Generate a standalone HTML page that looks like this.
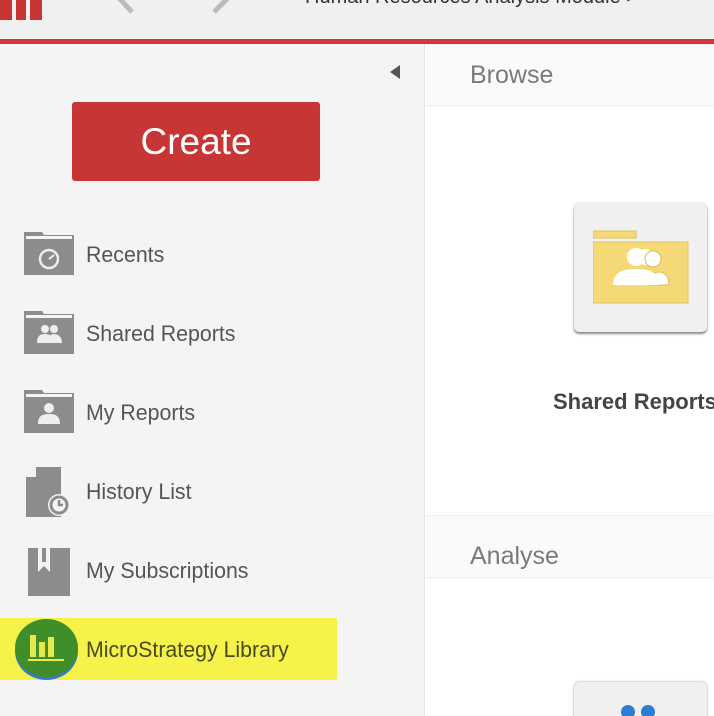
<!DOCTYPE html>
<html><head><meta charset="utf-8"><style>
*{margin:0;padding:0;box-sizing:border-box}
html,body{width:714px;height:716px;overflow:hidden}
body{background:#fff;font-family:"Liberation Sans",sans-serif;position:relative}
.top{position:absolute;left:0;top:0;width:714px;height:39px;background:#f0f0f0}
.red{position:absolute;left:0;top:39px;width:714px;height:5px;background:#d2383a}
.side{position:absolute;left:0;top:44px;width:425px;height:672px;background:#f4f4f4;border-right:1px solid #e6e6e6}
.band{position:absolute;left:426px;width:288px;height:62px;background:#fafafa;border-bottom:1px solid #ececec;border-top:1px solid #f0f0f0;color:#7a7a7a;font-size:25px;padding:16px 0 0 44px}
.create{position:absolute;left:72px;top:102px;width:248px;height:79px;background:#c73535;border-radius:3px;color:#fff;font-size:37px;text-align:center;line-height:79px}
.item{position:absolute;left:86px;font-size:22px;color:#555;transform:scaleX(.97);transform-origin:left}
.ico{position:absolute}
</style></head><body>
<div class="top">
 <div style="position:absolute;left:0;top:0;width:12px;height:20px;background:#c73535"></div>
 <div style="position:absolute;left:16px;top:0;width:10px;height:20px;background:#c73535"></div>
 <div style="position:absolute;left:30px;top:0;width:12px;height:20px;background:#c73535"></div>
 <svg style="position:absolute;left:110px;top:0" width="130" height="20"><path d="M9 -2 L22 12" stroke="#bbb" stroke-width="5" fill="none"/><path d="M118 -2 L104 12" stroke="#bbb" stroke-width="5" fill="none"/></svg>
 <div style="position:absolute;left:305px;top:-14px;font-size:20px;color:#333">Human Resources Analysis Module &gt;</div>
</div>
<div class="red"></div>
<div class="side"></div>
<svg style="position:absolute;left:387px;top:64px" width="16" height="16"><path d="M13 1 L3 8 L13 15Z" fill="#555"/></svg>
<div class="band" style="top:44px">Browse</div>
<div class="band" style="top:515px;padding-top:26px;height:63px">Analyse</div>
<div class="create">Create</div>

<svg class="ico" style="left:24px;top:230px" width="50" height="45"><path d="M0 2h18l2 3h30v40H0Z" fill="#8c8c8c"/><rect x="2" y="6" width="46" height="3" fill="#f4f4f4"/><circle cx="25" cy="29" r="9" fill="none" stroke="#eee" stroke-width="2.5"/><path d="M25 29l5-4" stroke="#eee" stroke-width="2"/></svg>
<div class="item" style="top:242px">Recents</div>

<svg class="ico" style="left:24px;top:309px" width="50" height="45"><path d="M0 2h18l2 3h30v40H0Z" fill="#8c8c8c"/><rect x="2" y="6" width="46" height="3" fill="#f4f4f4"/><circle cx="21" cy="20" r="4" fill="#eee"/><path d="M13 34c0-7 3-9 8-9s8 2 8 9Z" fill="#eee"/><circle cx="30" cy="20" r="4" fill="#eee"/><path d="M24 34c0-7 3-9 6-9s8 2 8 9Z" fill="#eee"/></svg>
<div class="item" style="top:321px">Shared Reports</div>

<svg class="ico" style="left:24px;top:388px" width="50" height="45"><path d="M0 2h18l2 3h30v40H0Z" fill="#8c8c8c"/><rect x="2" y="6" width="46" height="3" fill="#f4f4f4"/><circle cx="25" cy="20" r="5" fill="#eee"/><path d="M14 36c0-8 4-10 11-10s11 2 11 10Z" fill="#eee"/></svg>
<div class="item" style="top:400px">My Reports</div>

<svg class="ico" style="left:26px;top:467px" width="48" height="52"><path d="M10 0h25v50H0V10Z" fill="#8c8c8c"/><path d="M0 10h10V0Z" fill="#f4f4f4"/><circle cx="33" cy="38" r="11" fill="#f4f4f4"/><circle cx="33" cy="38" r="8" fill="none" stroke="#8c8c8c" stroke-width="3"/><path d="M33 33v5h4" stroke="#8c8c8c" stroke-width="2.5" fill="none"/></svg>
<div class="item" style="top:479px">History List</div>

<svg class="ico" style="left:28px;top:548px" width="44" height="50"><rect x="0" y="0" width="42" height="48" fill="#8c8c8c"/><path d="M10 0v24l6-6 6 6V0Z" fill="#f4f4f4"/><rect x="14" y="0" width="4" height="14" fill="#8c8c8c"/></svg>
<div class="item" style="top:558px">My Subscriptions</div>

<div style="position:absolute;left:0;top:618px;width:337px;height:62px;background:#f5f34a"></div>
<div style="position:absolute;left:15px;top:622px;width:63px;height:58px;border-radius:50%;background:#3a78c9"></div>
<div style="position:absolute;left:15px;top:619px;width:63px;height:58px;border-radius:50%;background:#3f8e2a"></div>
<svg class="ico" style="left:26px;top:633px" width="42" height="32"><g fill="#e8e84a"><rect x="4" y="2" width="6" height="22"/><rect x="13" y="9" width="6" height="15"/><rect x="22" y="4" width="6" height="20"/><rect x="2" y="26" width="36" height="2"/></g></svg>
<div class="item" style="top:637px;color:#4a4a20">MicroStrategy Library</div>

<div style="position:absolute;left:574px;top:203px;width:133px;height:129px;background:#f0f0f0;border-radius:5px;box-shadow:0 2px 2px #888,0 0 1px #aaa"></div>
<svg class="ico" style="left:593px;top:229px" width="96" height="76"><rect x="0" y="2" width="43" height="7" fill="#f5d976" stroke="#e2c25a"/><rect x="0" y="13" width="95" height="61" fill="#f5d976" stroke="#e2c25a"/><circle cx="52" cy="28" r="8" fill="#fff"/><path d="M57 56c0-9 3-13 9-13s10 5 10 13Z" fill="#fff" stroke="#d9be5c"/><circle cx="43" cy="28" r="9" fill="#fff"/><path d="M20 56c0-12 8-16 23-16s23 4 23 16Z" fill="#fff"/><circle cx="60" cy="30" r="8" fill="#fff" stroke="#d9be5c"/></svg>
<div style="position:absolute;left:553px;top:389px;font-size:22px;font-weight:bold;color:#444;white-space:nowrap">Shared Reports</div>

<div style="position:absolute;left:574px;top:682px;width:133px;height:60px;background:#f0f0f0;border-radius:5px;box-shadow:0 0 2px #999"></div>
<div style="position:absolute;left:621px;top:705px;width:14px;height:14px;border-radius:50%;background:#2a7fd4"></div>
<div style="position:absolute;left:641px;top:705px;width:14px;height:14px;border-radius:50%;background:#2a7fd4"></div>
</body></html>
